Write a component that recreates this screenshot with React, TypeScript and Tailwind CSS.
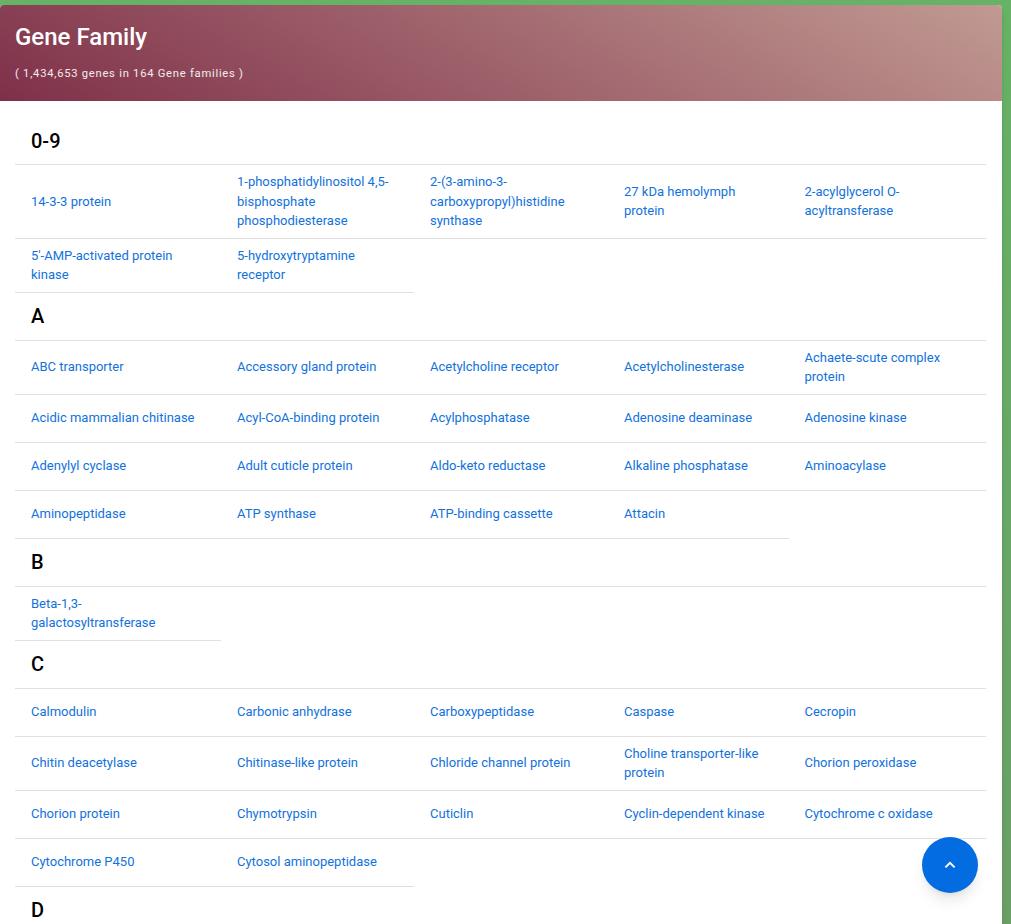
const sections = [
  {
    title: "0-9",
    items: [
      "14-3-3 protein",
      "1-phosphatidylinositol 4,5-bisphosphate phosphodiesterase",
      "2-(3-amino-3-carboxypropyl)histidine synthase",
      "27 kDa hemolymph protein",
      "2-acylglycerol O-acyltransferase",
      "5'-AMP-activated protein kinase",
      "5-hydroxytryptamine receptor",
    ],
  },
  {
    title: "A",
    items: [
      "ABC transporter",
      "Accessory gland protein",
      "Acetylcholine receptor",
      "Acetylcholinesterase",
      "Achaete-scute complex protein",
      "Acidic mammalian chitinase",
      "Acyl-CoA-binding protein",
      "Acylphosphatase",
      "Adenosine deaminase",
      "Adenosine kinase",
      "Adenylyl cyclase",
      "Adult cuticle protein",
      "Aldo-keto reductase",
      "Alkaline phosphatase",
      "Aminoacylase",
      "Aminopeptidase",
      "ATP synthase",
      "ATP-binding cassette",
      "Attacin",
    ],
  },
  { title: "B", items: ["Beta-1,3-galactosyltransferase"] },
  {
    title: "C",
    items: [
      "Calmodulin",
      "Carbonic anhydrase",
      "Carboxypeptidase",
      "Caspase",
      "Cecropin",
      "Chitin deacetylase",
      "Chitinase-like protein",
      "Chloride channel protein",
      "Choline transporter-like protein",
      "Chorion peroxidase",
      "Chorion protein",
      "Chymotrypsin",
      "Cuticlin",
      "Cyclin-dependent kinase",
      "Cytochrome c oxidase",
      "Cytochrome P450",
      "Cytosol aminopeptidase",
    ],
  },
  { title: "D", items: [] },
];

function Section({ title, items }: { title: string; items: string[] }) {
  return (
    <div>
      <h3 className="h-[47px] pl-4 flex items-center text-[20px] font-medium text-black">
        {title}
      </h3>
      <div className="grid grid-cols-[206px_193px_194px_180.5px_197.5px] border-t border-[#e0e0e0]">
        {items.map((item) => (
          <div
            key={item}
            className="min-h-12 px-4 py-[7px] flex items-center border-b border-[#e0e0e0]"
          >
            <a href="#" className="text-[13px] leading-[19.5px] text-[#1272dc]">
              {item}
            </a>
          </div>
        ))}
      </div>
    </div>
  );
}

export default function App() {
  return (
    <div
      className="relative h-screen overflow-hidden pt-[5px] pr-[9px] bg-gradient-to-b from-[#66b266] to-[#6a9f66]"
      style={{ fontFamily: "Roboto, sans-serif" }}
    >
      <div className="bg-white rounded-t-[4px] shadow-md">
        <div className="h-24 px-[15px] pt-4 rounded-t-[4px] bg-[linear-gradient(30deg,#7f3049,#c19a92)] text-white">
          <h1 className="text-2xl leading-8 font-medium">Gene Family</h1>
          <p className="mt-[13px] text-[11.2px] leading-4 tracking-[0.75px] text-white/90">
            ( 1,434,653 genes in 164 Gene families )
          </p>
        </div>
        <div className="pt-4 pl-[15px] pr-4">
          {sections.map((s) => (
            <Section key={s.title} title={s.title} items={s.items} />
          ))}
        </div>
      </div>
      <button className="absolute left-[922px] top-[837px] w-14 h-14 rounded-full bg-[#026ce0] shadow-lg flex items-center justify-center">
        <svg width="24" height="24" viewBox="0 0 24 24" fill="none" stroke="white" strokeWidth="2">
          <path d="M7.4 14.4 12 9.8l4.6 4.6" />
        </svg>
      </button>
    </div>
  );
}
